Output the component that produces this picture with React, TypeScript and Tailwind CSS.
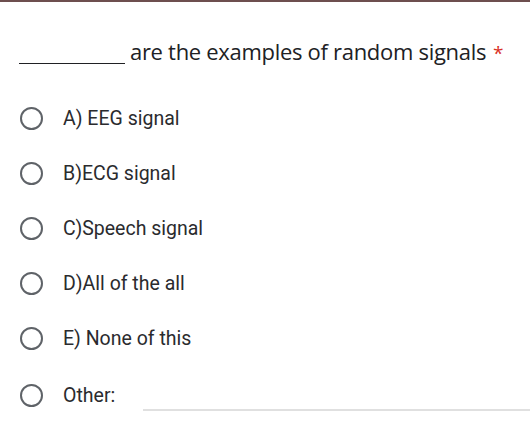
const options = ["A) EEG signal", "B)ECG signal", "C)Speech signal", "D)All of the all", "E) None of this"];

const Radio = () => (
  <div className="w-[23px] h-[23px] rounded-full border-2 border-[#5f6368] shrink-0" />
);

export default function App() {
  return (
    <div className="w-[530px] h-[422px] bg-white overflow-hidden font-['Roboto',sans-serif]">
      <div className="h-[2px] bg-[#6d4f4f]" />
      <div className="pt-[33px] pl-[19px] flex items-baseline text-[22px] text-[#202124] font-['Open_Sans',sans-serif] tracking-[-0.3px]">
        <span className="inline-block w-[106px] border-b border-[#202124] self-baseline h-[1px] translate-y-[4px]" />
        <span className="ml-[5px]">are the examples of random signals</span>
        <span className="ml-[7px] text-[#d93025] text-[19px]">*</span>
      </div>
      <div className="mt-[39px] flex flex-col gap-[32px]">
        {options.map((o) => (
          <div key={o} className="flex items-center h-[23px] pl-[20px]">
            <Radio />
            <span className="ml-[20px] text-[19.5px] text-[#2a2b2e]">{o}</span>
          </div>
        ))}
        <div className="flex items-center h-[23px] pl-[20px] mt-[2px]">
          <Radio />
          <span className="ml-[20px] text-[19.5px] text-[#2a2b2e]">Other:</span>
          <div className="flex-1 ml-[28px] mt-[28px] h-[2px] bg-[#e0e0e0]" />
        </div>
      </div>
    </div>
  );
}
